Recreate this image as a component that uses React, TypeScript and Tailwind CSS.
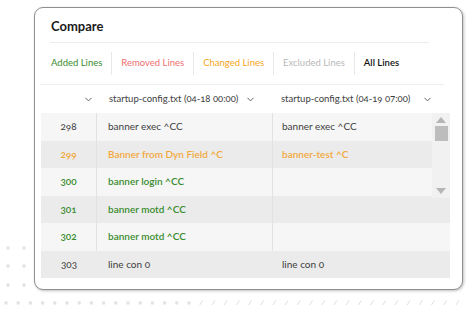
import { ChevronDown } from "lucide-react";

type Kind = "same" | "changed" | "added";

const rows: { n: number; left: string; right: string; kind: Kind }[] = [
  { n: 298, left: "banner exec ^CC", right: "banner exec ^CC", kind: "same" },
  { n: 299, left: "Banner from Dyn Field ^C", right: "banner-test ^C", kind: "changed" },
  { n: 300, left: "banner login ^CC", right: "", kind: "added" },
  { n: 301, left: "banner motd ^CC", right: "", kind: "added" },
  { n: 302, left: "banner motd ^CC", right: "", kind: "added" },
  { n: 303, left: "line con 0", right: "line con 0", kind: "same" },
];

const kindText: Record<Kind, string> = {
  same: "text-[#3d3d3d]",
  changed: "text-[#f2a93b] font-semibold",
  added: "text-[#3a8c2f] font-semibold",
};

const tabs = [
  { label: "Added Lines", cls: "text-[#3a8c2f]" },
  { label: "Removed Lines", cls: "text-[#ef6f6f]" },
  { label: "Changed Lines", cls: "text-[#f5a623]" },
  { label: "Excluded Lines", cls: "text-[#b8b8b8]" },
  { label: "All Lines", cls: "text-[#111] font-semibold" },
];

// faint marks drawn behind the card
const Pattern = () => {
  const squares = [
    [8, 248], [24, 248], [8, 266], [24, 266], [8, 285], [24, 285],
  ];
  const bottom = Array.from({ length: 38 }, (_, i) => 6 + i * 12.2);
  return (
    <svg className="absolute inset-0" width="474" height="315">
      {squares.map(([x, y], i) => (
        <rect key={i} x={x - 1.5} y={y - 1.5} width="3" height="3" fill="#e0e0e0" />
      ))}
      {bottom.map((x, i) =>
        x < 190 ? (
          <rect key={i} x={x - 1.5} y={301.5} width="3" height="3" fill="#e2e2e2" />
        ) : (
          <line key={i} x1={x - 1.5} y1={305} x2={x + 1.5} y2={300.5} stroke="#dedede" strokeWidth="1" />
        )
      )}
    </svg>
  );
};

export default function App() {
  return (
    <div className="relative h-[315px] w-[474px] overflow-hidden bg-white font-['Lato',sans-serif] text-[10px] [font-variant-numeric:oldstyle-nums]">
      <Pattern />
      <div className="relative pl-[34px] pt-[7px]">
        <div className="h-[283px] w-[429px] rounded-[9px] border border-[#8f8f8f] bg-white shadow-[1px_1px_3px_rgba(0,0,0,0.25)]">
          {/* title */}
          <div className="flex h-[34px] items-center pl-[16px] pt-[3px]">
            <h1 className="text-[13px] font-bold text-[#1b1b1b]">Compare</h1>
          </div>
          <div className="ml-[15px] h-px w-[379px] bg-[#ececec]" />

          {/* tabs */}
          <div className="flex h-[41px] items-center whitespace-nowrap pl-[16px] text-[9.5px]">
            {tabs.map((t, i) => (
              <div
                key={t.label}
                className={`flex h-[23px] items-center ${i === 0 ? "pr-[9px]" : "border-l border-[#e8e8e8] px-[9px]"} ${t.cls}`}
              >
                {t.label}
              </div>
            ))}
          </div>
          <div className="ml-[5px] h-px w-[404px] bg-[#ededed]" />

          {/* file headers */}
          <div className="ml-[6px] flex h-[28px] w-[409px] items-center whitespace-nowrap text-[9.5px] text-[#3d3d3d]">
            <div className="flex w-[56px] shrink-0 justify-end pr-[3px]">
              <ChevronDown size={11} strokeWidth={2} color="#555" />
            </div>
            <div className="flex w-[176px] shrink-0 items-center gap-[7px] pl-[12px]">
              <span>startup-config.txt (04-18 00:00)</span>
              <ChevronDown size={11} strokeWidth={2} color="#555" />
            </div>
            <div className="flex items-center gap-[12px] pl-[8px]">
              <span>startup-config.txt (04-19 07:00)</span>
              <ChevronDown size={11} strokeWidth={2} color="#555" />
            </div>
          </div>

          {/* diff table */}
          <div className="relative ml-[6px] w-[409px] whitespace-nowrap">
            {rows.map((r, i) => {
              const last = i === rows.length - 1;
              const sep = last ? "" : "border-r border-[#e2e2e2]";
              return (
                <div
                  key={r.n}
                  className={`flex h-[27.5px] items-center ${i % 2 === 0 ? "bg-[#f6f6f6]" : "bg-[#ebebeb]"} ${kindText[r.kind]}`}
                >
                  <div className={`flex h-full w-[56px] items-center justify-center ${sep}`}>{r.n}</div>
                  <div className={`flex h-full w-[176px] items-center pl-[11px] ${sep}`}>{r.left}</div>
                  <div className="flex h-full flex-1 items-center pl-[9px]">{r.right}</div>
                </div>
              );
            })}
            {/* scrollbar */}
            <div className="absolute right-0 top-0 flex h-[85px] w-[18px] flex-col items-center bg-[#f1f1f1] pt-[4px]">
              <svg width="10" height="6" viewBox="0 0 10 6">
                <path d="M0 6 L5 0 L10 6 Z" fill="#b5b5b5" />
              </svg>
              <div className="mt-[3px] h-[15px] w-[13px] bg-[#bdbdbd]" />
              <div className="flex-1" />
              <svg width="10" height="6" viewBox="0 0 10 6" className="mb-[4px]">
                <path d="M0 0 L10 0 L5 6 Z" fill="#b5b5b5" />
              </svg>
            </div>
          </div>
        </div>
      </div>
    </div>
  );
}
